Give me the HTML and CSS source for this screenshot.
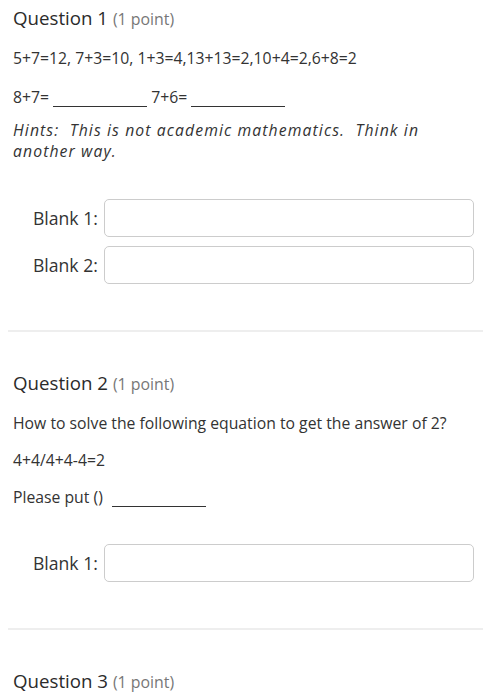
FILE: index.html
```html
<!DOCTYPE html>
<html>
<head>
<meta charset="utf-8">
<link rel="stylesheet" href="styles.css">
</head>
<body>
<div class="page">
  <section class="question">
    <h2 class="q-title">Question 1 <span class="pts">(1 point)</span></h2>
    <p class="line first">5+7=12, 7+3=10, 1+3=4,13+13=2,10+4=2,6+8=2</p>
    <p class="line blanks">8+7= <span class="blank"></span> 7+6= <span class="blank"></span></p>
    <p class="hint">Hints:&nbsp; This is not academic mathematics.&nbsp; Think in another way.</p>
    <div class="answers">
      <div class="row"><span class="label">Blank 1:</span><span class="input"></span></div>
      <div class="row"><span class="label">Blank 2:</span><span class="input"></span></div>
    </div>
  </section>
  <div class="divider"></div>
  <section class="question">
    <h2 class="q-title">Question 2 <span class="pts">(1 point)</span></h2>
    <p class="line first">How to solve the following equation to get the answer of 2?</p>
    <p class="line">4+4/4+4-4=2</p>
    <p class="line">Please put () <span class="blank wide-gap"></span></p>
    <div class="answers">
      <div class="row"><span class="label">Blank 1:</span><span class="input"></span></div>
    </div>
  </section>
  <div class="divider"></div>
  <section class="question">
    <h2 class="q-title">Question 3 <span class="pts">(1 point)</span></h2>
  </section>
</div>
</body>
</html>
```
FILE: styles.css
```css
html, body {
  margin: 0;
  padding: 0;
  background: #fff;
}
body {
  font-family: "Open Sans", "Liberation Sans", sans-serif;
  color: #333;
}
.page {
  padding: 6px 1px 0 8px;
}
.question {
  padding-left: 5px;
}
.q-title {
  margin: 0;
  font-size: 18.7px;
  line-height: 24px;
  font-weight: 400;
  color: #2b2b2b;
}
.pts {
  font-size: 15.9px;
  color: #777;
}
.line {
  margin: 17px 0 0;
  font-size: 15.75px;
  line-height: 20px;
}
.line.blanks {
  margin-top: 19px;
}
.blank {
  display: inline-block;
  width: 94px;
  border-bottom: 1px solid #333;
  vertical-align: -4px;
}
.blank.wide-gap {
  margin-left: 5px;
}
.hint {
  margin: 13px 0 0;
  font-style: italic;
  font-size: 15.75px;
  line-height: 21px;
  letter-spacing: 1.1px;
  color: #333;
}
.answers {
  margin-top: 37px;
  display: flex;
  flex-direction: column;
  gap: 9px;
}
.row {
  display: flex;
  align-items: center;
}
.label {
  width: 65px;
  padding-left: 20px;
  font-size: 17.6px;
  white-space: nowrap;
  color: #333;
  margin-right: 6px;
}
.input {
  display: block;
  width: 368px;
  height: 36px;
  border: 1px solid #ccc;
  border-radius: 5px;
  background: #fff;
}
.divider {
  height: 2px;
  background: #eee;
  margin: 46px 0 39px;
}
```
